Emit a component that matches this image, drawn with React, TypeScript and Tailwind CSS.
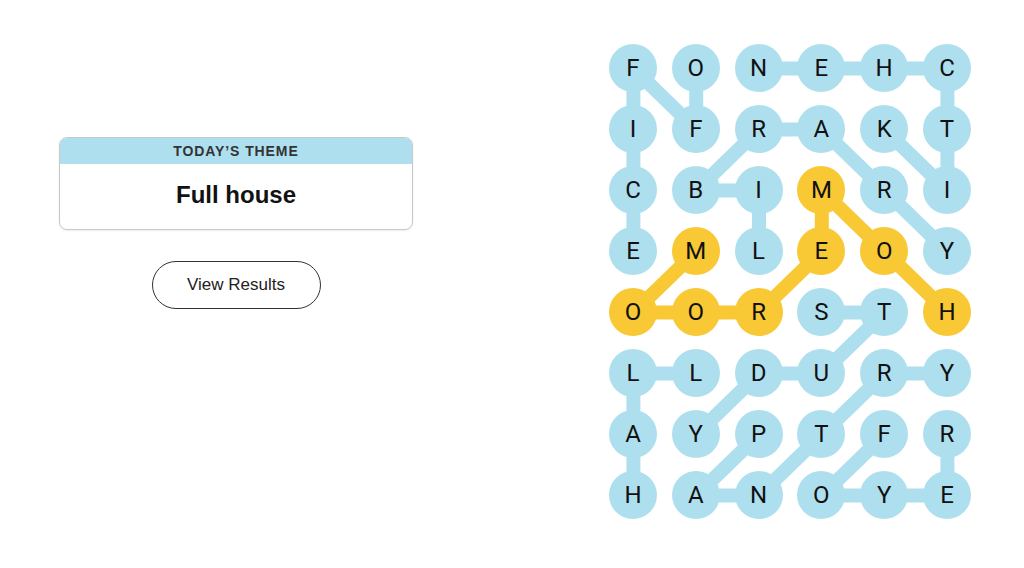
import React from "react";

const LETTERS = ["FONEHC", "IFRAKT", "CBIMRI", "EMLEOY", "OORSTH", "LLDURY", "AYPTFR", "HANOYE"];

const CW = 62.8;
const RH = 61;

// words found on the board, as paths of [row, col]
const WORDS: { path: number[][]; spangram?: boolean }[] = [
  { path: [[1, 4], [2, 5], [1, 5], [0, 5], [0, 4], [0, 3], [0, 2]] },
  { path: [[3, 2], [2, 2], [2, 1], [1, 2], [1, 3], [2, 4], [3, 5]] },
  { path: [[0, 1], [1, 1], [0, 0], [1, 0], [2, 0], [3, 0]] },
  { path: [[4, 3], [4, 4], [5, 3], [5, 2], [6, 1]] },
  { path: [[7, 0], [6, 0], [5, 0], [5, 1]] },
  { path: [[6, 2], [7, 1], [7, 2], [6, 3], [5, 4], [5, 5]] },
  { path: [[6, 4], [7, 3], [7, 4], [7, 5], [6, 5]] },
  { path: [[4, 5], [3, 4], [2, 3], [3, 3], [4, 2], [4, 1], [4, 0], [3, 1]], spangram: true },
];

const BLUE = "#aedfee";
const YELLOW = "#f8c835";

const yellowCells = new Set(
  WORDS.filter((w) => w.spangram).flatMap((w) => w.path.map(([r, c]) => `${r}-${c}`))
);

const Board = () => {
  return (
    <div className="relative">
      <svg className="absolute inset-0" width={CW * 6} height={RH * 8}>
        {WORDS.map((w, i) => (
          <polyline
            key={i}
            points={w.path.map(([r, c]) => `${c * CW + CW / 2},${r * RH + RH / 2}`).join(" ")}
            fill="none"
            stroke={w.spangram ? YELLOW : BLUE}
            strokeWidth={14}
            strokeLinejoin="round"
          />
        ))}
      </svg>
      <div className="relative grid grid-cols-[repeat(6,62.8px)] grid-rows-[repeat(8,61px)]">
        {LETTERS.map((row, r) =>
          row.split("").map((ch, c) => (
            <div key={`${r}-${c}`} className="flex items-center justify-center">
              <div
                className={
                  "flex h-[48px] w-[48px] items-center justify-center rounded-full text-[24px] text-[#111] " +
                  (yellowCells.has(`${r}-${c}`) ? "bg-[#f8c835]" : "bg-[#aedfee]")
                }
                style={{ fontFamily: "Roboto, 'Liberation Sans', sans-serif" }}
              >
                {ch}
              </div>
            </div>
          ))
        )}
      </div>
    </div>
  );
};

export default function App() {
  return (
    <div
      className="flex h-[568px] w-[1024px] bg-white text-[#121212]"
      style={{ fontFamily: "'Liberation Sans', Arial, sans-serif" }}
    >
      <div className="w-[601.6px] shrink-0 pl-[59px] pt-[137px]">
        <div className="flex w-[354px] flex-col items-center">
          <div className="w-full overflow-hidden rounded-lg border border-[#c8c8c8] shadow-[0_1px_2px_rgba(0,0,0,0.08)]">
            <div className="flex h-[26px] items-center justify-center bg-[#aedfee] text-[14px] font-bold tracking-[0.9px] text-[#333]">
              TODAY’S THEME
            </div>
            <div className="flex h-[65px] items-center justify-center pb-1 text-[24px] font-bold">
              Full house
            </div>
          </div>
          <button className="mt-[31px] flex h-[48px] w-[169px] items-center justify-center rounded-full border-[1.5px] border-[#333] text-[17px] text-[#222]">
            View Results
          </button>
        </div>
      </div>
      <div className="pt-[37.5px]">
        <Board />
      </div>
    </div>
  );
}
